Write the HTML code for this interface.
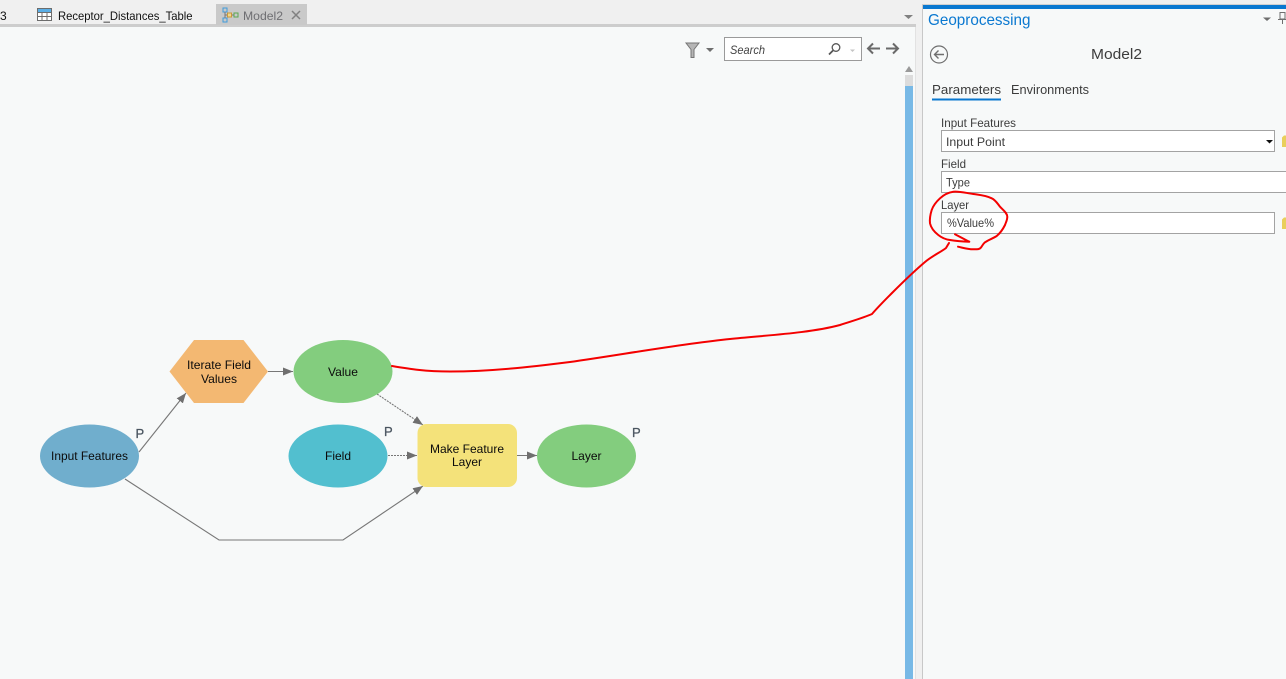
<!DOCTYPE html>
<html><head><meta charset="utf-8"><title>Model2</title>
<style>
html,body{margin:0;padding:0;width:1286px;height:679px;overflow:hidden;background:#f0f0f0}
svg{display:block}
text{font-family:"Liberation Sans",sans-serif;font-size:12px;fill:#111}
.ui{fill:#3c3c3c}
.n{text-anchor:middle;fill:#0b0b0b}
.p{font-size:13px;fill:#4a5560;stroke:#4a5560;stroke-width:.3}
</style></head><body>
<svg width="1286" height="679" viewBox="0 0 1286 679" xmlns="http://www.w3.org/2000/svg">
<defs>
<marker id="a" markerUnits="userSpaceOnUse" markerWidth="12" markerHeight="10" refX="10" refY="4" orient="auto"><path d="M0 0L10 4L0 8Z" fill="#6f6f6f"/></marker>
</defs>
<rect width="1286" height="679" fill="#f0f0f0"/>
<!-- tabs -->
<rect x="0" y="24" width="916" height="3" fill="#cdcdcd"/>
<rect x="216" y="4" width="91" height="21" fill="#c9c9c9"/>
<rect x="0" y="27" width="915" height="652" fill="#f7f9f9"/>
<rect x="915" y="27" width="1" height="652" fill="#e2e2e2"/>
<text x="0" y="20" textLength="7" style="fill:#111">3</text>
<g>
<rect x="37.500" y="8.500" width="14" height="12" fill="#fff" stroke="#6d6d6d"/>
<rect x="38" y="9" width="13" height="3" fill="#5aaee6"/>
<path d="M37.500 12.500H51.500M37.500 16.500H51.500M42 12V20M47 12V20" stroke="#6d6d6d" stroke-width="1" fill="none"/>
</g>
<text x="58" y="20" textLength="134.500" lengthAdjust="spacingAndGlyphs">Receptor_Distances_Table</text>
<g fill="none">
<rect x="223" y="8" width="4" height="4" stroke="#3f9bdc"/>
<rect x="223" y="18" width="4" height="4" stroke="#3f9bdc"/>
<path d="M225 12V18M225 15H228M231.500 15H234" stroke="#777"/>
<rect x="227.500" y="13" width="4" height="4" stroke="#c9973a" fill="#f1d98a"/>
<rect x="234" y="13" width="4" height="4" stroke="#5aa84e"/>
</g>
<text x="243" y="20" textLength="40" lengthAdjust="spacingAndGlyphs" style="fill:#6e6e72">Model2</text>
<path d="M292 11L300 19M300 11L292 19" stroke="#808080" stroke-width="1.500" fill="none"/>
<path d="M904 15H913L908.500 19Z" fill="#808080"/>
<!-- search tools -->
<path d="M686 43H699L694 49.500V57.500H691V49.500Z" fill="#b5b5b5" stroke="#757575"/>
<path d="M706 48H714L710 52Z" fill="#6e6e6e"/>
<rect x="724.500" y="37.500" width="137" height="23" fill="#fff" stroke="#9a9a9a"/>
<text x="730" y="54" textLength="35" lengthAdjust="spacingAndGlyphs" style="font-style:italic;fill:#444">Search</text>
<circle cx="836" cy="47.500" r="3.800" fill="none" stroke="#555" stroke-width="1.300"/>
<path d="M833 50.500L829 54.500" stroke="#555" stroke-width="1.800"/>
<path d="M850 49.500H855L852.500 52Z" fill="#c4c4c4"/>
<path d="M880 48.500H868M873 43.500L868 48.500L873 53.500" fill="none" stroke="#6a6a6a" stroke-width="2"/>
<path d="M886 48.500H898M893 43.500L898 48.500L893 53.500" fill="none" stroke="#6a6a6a" stroke-width="2"/>
<!-- scrollbar -->
<path d="M905 72L909 66L913 72Z" fill="#9a9a9a"/>
<rect x="905" y="75" width="8" height="11" fill="#dcdcdc"/>
<rect x="905" y="86" width="8" height="593" fill="#78b9e6"/>
<!-- model edges -->
<g fill="none" stroke="#777" stroke-width="1.100">
<path d="M139 452L186 393" marker-end="url(#a)"/>
<path d="M268 371.500H293" marker-end="url(#a)"/>
<path d="M377 394L423 425" stroke-dasharray="2 1" marker-end="url(#a)"/>
<path d="M388 455.500H417" stroke-dasharray="2 1" marker-end="url(#a)"/>
<path d="M517 455.500H537" marker-end="url(#a)"/>
<path d="M125 479L219 540H343L423 486" marker-end="url(#a)"/>
</g>
<!-- model nodes -->
<ellipse cx="89.500" cy="456" rx="49.500" ry="31.500" fill="#70aecd"/>
<path d="M169.500 371.500L194 340H243.500L268 371.500L243.500 403H194Z" fill="#f3b872"/>
<ellipse cx="343" cy="371.500" rx="49.500" ry="31.500" fill="#83cd7e"/>
<ellipse cx="338" cy="456" rx="49.500" ry="31.500" fill="#52bfcf"/>
<rect x="417.500" y="424" width="99.500" height="63" rx="9" fill="#f4e27a"/>
<ellipse cx="586.500" cy="456" rx="49.500" ry="31.500" fill="#83cd7e"/>
<text class="n" x="89.500" y="460" textLength="77" lengthAdjust="spacingAndGlyphs">Input Features</text>
<text class="n" x="219" y="369" textLength="64" lengthAdjust="spacingAndGlyphs">Iterate Field</text>
<text class="n" x="219" y="383" textLength="36" lengthAdjust="spacingAndGlyphs">Values</text>
<text class="n" x="343" y="376" textLength="30" lengthAdjust="spacingAndGlyphs">Value</text>
<text class="n" x="338" y="460" textLength="26" lengthAdjust="spacingAndGlyphs">Field</text>
<text class="n" x="467" y="453" textLength="74" lengthAdjust="spacingAndGlyphs">Make Feature</text>
<text class="n" x="467" y="466" textLength="30" lengthAdjust="spacingAndGlyphs">Layer</text>
<text class="n" x="586.500" y="460" textLength="30" lengthAdjust="spacingAndGlyphs">Layer</text>
<text class="p" x="135.500" y="438">P</text>
<text class="p" x="384" y="436">P</text>
<text class="p" x="632" y="437">P</text>
<!-- geoprocessing pane -->
<rect x="922" y="4" width="364" height="675" fill="#f7f9f9"/>
<rect x="922" y="4" width="1" height="675" fill="#c8c8c8"/>
<rect x="922" y="4" width="364" height="1" fill="#d0d0d0"/>
<rect x="923" y="5" width="363" height="4" fill="#0a78d0"/>
<text x="928" y="25" textLength="102.500" lengthAdjust="spacingAndGlyphs" style="font-size:16px;fill:#0a78d0">Geoprocessing</text>
<path d="M1263 17.500H1271L1267 21Z" fill="#6e6e6e"/>
<path d="M1280 12.500H1285V19H1280ZM1278 19.500H1286M1282.500 19.500V24" fill="none" stroke="#6e6e6e"/>
<circle cx="939" cy="54.500" r="8.500" fill="none" stroke="#6f6f6f" stroke-width="1.200"/>
<path d="M944 54.500H934.500M938.500 50.500L934.500 54.500L938.500 58.500" fill="none" stroke="#6f6f6f" stroke-width="1.400"/>
<text x="1091" y="59" textLength="51" lengthAdjust="spacingAndGlyphs" style="font-size:15px" class="ui">Model2</text>
<text x="932" y="94" textLength="69" lengthAdjust="spacingAndGlyphs" style="font-size:13px" class="ui">Parameters</text>
<text x="1011" y="94" textLength="78" lengthAdjust="spacingAndGlyphs" style="font-size:13px" class="ui">Environments</text>
<rect x="932" y="98.500" width="69" height="2" fill="#0a78d0"/>
<text x="941" y="127" textLength="75" lengthAdjust="spacingAndGlyphs" class="ui">Input Features</text>
<rect x="941.500" y="130.500" width="333" height="21" fill="#fff" stroke="#a3a3a3"/>
<text x="946" y="146" textLength="59" lengthAdjust="spacingAndGlyphs" class="ui">Input Point</text>
<path d="M1266 140H1273L1269.500 143.500Z" fill="#111"/>
<path d="M1282 147V137.500L1284 135.500H1286V147Z" fill="#e9cf5c"/>
<text x="941" y="168" textLength="25" lengthAdjust="spacingAndGlyphs" class="ui">Field</text>
<rect x="941.500" y="171.500" width="350" height="21" fill="#fff" stroke="#a3a3a3"/>
<text x="946" y="186.500" textLength="24" lengthAdjust="spacingAndGlyphs" class="ui">Type</text>
<text x="941" y="209" textLength="28" lengthAdjust="spacingAndGlyphs" class="ui">Layer</text>
<rect x="941.500" y="212.500" width="333" height="21" fill="#fff" stroke="#a3a3a3"/>
<text x="947" y="227" textLength="47" lengthAdjust="spacingAndGlyphs" class="ui">%Value%</text>
<path d="M1282 229V219.500L1284 217.500H1286V229Z" fill="#e9cf5c"/>
<!-- red annotation -->
<g fill="none" stroke="#f40000" stroke-width="2" stroke-linecap="round" stroke-linejoin="round">
<path d="M392 366C410 369 425 371.500 450 371.500C490 371.500 530 367 570 362C620 355 680 344 730 339C770 335 810 333 840 325C852 321 863 318 872 314C878 307 885 300 892 293C902 283 912 273 925 262C932 256 941 252 946 248L949 243"/>
<path d="M958 246.700C964 248 968 249.300 973 249.300C977 249.300 979.500 249.500 981 247.500C982.500 245.500 983 244 985 242.300C989 239.500 993 238.500 996.700 236C1001 232.500 1003 229 1005 225C1006 222 1007.300 220 1007.300 216.700C1007.300 213 1003 210 1000 206.700C997 203 995.500 200 991.700 198.300C986 195.500 980 195 973.300 194C966 193 959 191 953.300 191.700C947.500 192.500 943.500 195 940 198.300C936 202 933 206 931.700 210C930.300 214.500 929.500 219 930 223.300C931 228 934.500 232 938.300 235C942 238 946 239.500 950 240C956 241 963 241.500 969.300 241.700C964 239 959 236.500 955 234.300"/>
</g>
</svg>
</body></html>
